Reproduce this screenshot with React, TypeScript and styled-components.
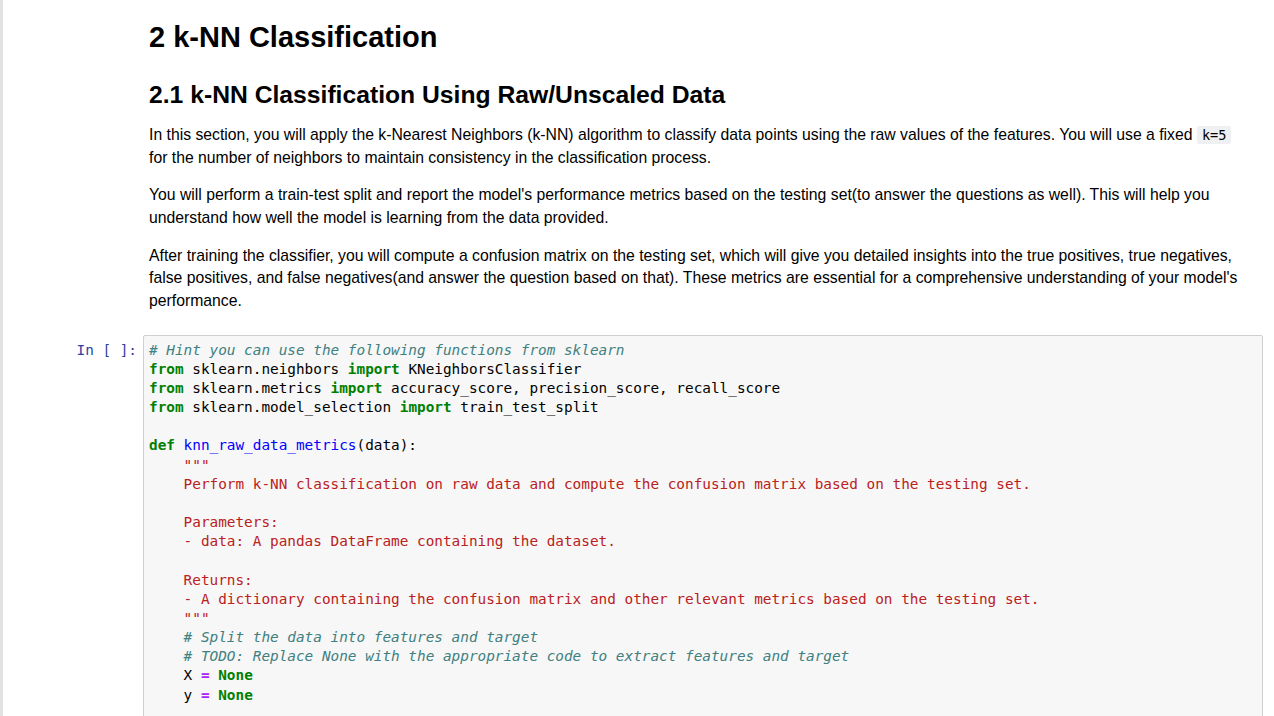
import React from "react";
import styled, { createGlobalStyle } from "styled-components";

const GlobalStyle = createGlobalStyle`
  html, body {
    margin: 0;
    padding: 0;
    overflow: hidden;
    background: #fff;
  }
  body {
    font-family: "Liberation Sans", Arial, sans-serif;
    color: #000;
  }
`;

const mono = `"DejaVu Sans Mono", "Liberation Mono", monospace`;

const Page = styled.div`
  display: flex;
  min-height: 100vh;
  border-left: 3px solid #e2e2e2;
`;

const Notebook = styled.div`
  flex: 1;
  display: flex;
  flex-direction: column;
  padding: 20px 11px 0 0;
`;

const Cell = styled.div`
  display: flex;
  align-items: flex-start;
`;

const Prompt = styled.div`
  flex: none;
  width: 140px;
  box-sizing: border-box;
  padding: 6px 6px 0 0;
  text-align: right;
  font-family: ${mono};
  font-size: 14.37px;
  line-height: 19.15px;
  color: #303f9f;
  white-space: pre;
`;

const Rendered = styled.div`
  flex: 1;
  padding: 0 14px 0 6px;
  min-width: 0;
`;

const H1 = styled.h1`
  margin: 0;
  font-size: 29px;
  line-height: 35px;
  font-weight: bold;
`;

const H2 = styled.h2`
  margin: 25px 0 0;
  font-size: 24.7px;
  line-height: 30px;
  font-weight: bold;
`;

const Para = styled.p<{ $first?: boolean }>`
  margin: ${(p) => (p.$first ? "14px" : "14.6px")} 0 0;
  font-size: 15.75px;
  line-height: 22.857px;
`;

const InlineCode = styled.code`
  font-family: ${mono};
  font-size: 13.6px;
  background: #eff0f1;
  padding: 1px 5px;
  border-radius: 2px;
`;

const CodeCell = styled(Cell)`
  margin-top: 21.5px;
`;

const CodeBox = styled.div`
  flex: 1;
  min-width: 0;
  background: #f7f7f7;
  border: 1px solid #cfcfcf;
  border-radius: 2px;
  padding: 5px 5px;
`;

const Pre = styled.pre`
  margin: 0;
  font-family: ${mono};
  font-size: 14.37px;
  line-height: 19.15px;
  color: #000;
  white-space: pre;
`;

const Kw = styled.span`
  color: #008000;
  font-weight: bold;
`;

const Cm = styled.span`
  color: #408080;
  font-style: italic;
`;

const Fn = styled.span`
  color: #0000ff;
`;

const Str = styled.span`
  color: #ba2121;
`;

const Op = styled.span`
  color: #aa22ff;
  font-weight: bold;
`;

export default function App() {
  return (
    <>
      <GlobalStyle />
      <Page>
        <Notebook>
          <Cell>
            <Prompt />
            <Rendered>
              <H1>2 k-NN Classification</H1>
              <H2>2.1 k-NN Classification Using Raw/Unscaled Data</H2>
              <Para $first>
                In this section, you will apply the k-Nearest Neighbors (k-NN)
                algorithm to classify data points using the raw values of the
                features. You will use a fixed <InlineCode>k=5</InlineCode> for
                the number of neighbors to maintain consistency in the
                classification process.
              </Para>
              <Para>
                You will perform a train-test split and report the model's
                performance metrics based on the testing set(to answer the
                questions as well). This will help you understand how well the
                model is learning from the data provided.
              </Para>
              <Para>
                After training the classifier, you will compute a confusion
                matrix on the testing set, which will give you detailed insights
                into the true positives, true negatives, false positives, and
                false negatives(and answer the question based on that). These
                metrics are essential for a comprehensive understanding of your
                model's performance.
              </Para>
            </Rendered>
          </Cell>
          <CodeCell>
            <Prompt>In [ ]:</Prompt>
            <CodeBox>
              <Pre>
                <Cm># Hint you can use the following functions from sklearn</Cm>
                {"\n"}
                <Kw>from</Kw> sklearn.neighbors <Kw>import</Kw> KNeighborsClassifier
                {"\n"}
                <Kw>from</Kw> sklearn.metrics <Kw>import</Kw> accuracy_score, precision_score, recall_score
                {"\n"}
                <Kw>from</Kw> sklearn.model_selection <Kw>import</Kw> train_test_split
                {"\n\n"}
                <Kw>def</Kw> <Fn>knn_raw_data_metrics</Fn>(data):
                {"\n    "}
                <Str>{'"""'}</Str>
                {"\n    "}
                <Str>Perform k-NN classification on raw data and compute the confusion matrix based on the testing set.</Str>
                {"\n\n    "}
                <Str>Parameters:</Str>
                {"\n    "}
                <Str>- data: A pandas DataFrame containing the dataset.</Str>
                {"\n\n    "}
                <Str>Returns:</Str>
                {"\n    "}
                <Str>- A dictionary containing the confusion matrix and other relevant metrics based on the testing set.</Str>
                {"\n    "}
                <Str>{'"""'}</Str>
                {"\n    "}
                <Cm># Split the data into features and target</Cm>
                {"\n    "}
                <Cm># TODO: Replace None with the appropriate code to extract features and target</Cm>
                {"\n    "}X <Op>=</Op> <Kw>None</Kw>
                {"\n    "}y <Op>=</Op> <Kw>None</Kw>
                {"\n\n\n"}
              </Pre>
            </CodeBox>
          </CodeCell>
        </Notebook>
      </Page>
    </>
  );
}
